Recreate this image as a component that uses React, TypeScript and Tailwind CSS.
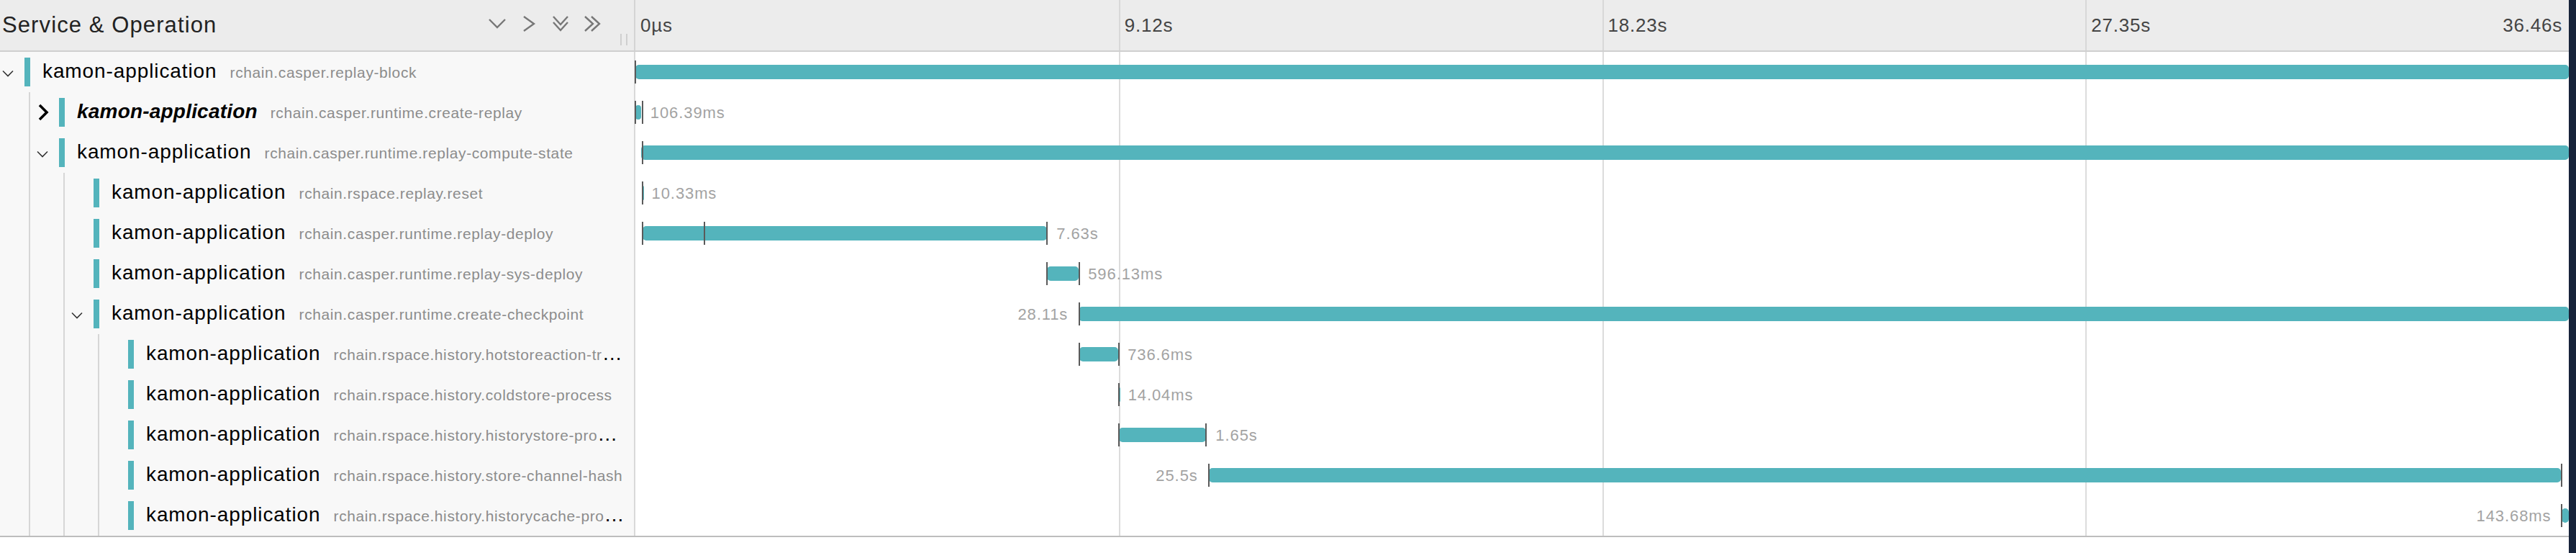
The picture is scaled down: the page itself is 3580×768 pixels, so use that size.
import React from 'react';

const TOTAL = 36.46;

type Row = {
  depth: number;
  toggle?: 'open' | 'closed';
  op: string;
  start: number;
  end: number;
  ticks: number[];
  label?: string;
  side?: 'left' | 'right';
};

const ROWS: Row[] = [
  { depth: 0, toggle: 'open', op: 'rchain.casper.replay-block', start: 0, end: 36.46, ticks: [0] },
  { depth: 1, toggle: 'closed', op: 'rchain.casper.runtime.create-replay', start: 0, end: 0.1064, ticks: [0, 0.136], label: '106.39ms', side: 'right' },
  { depth: 1, toggle: 'open', op: 'rchain.casper.runtime.replay-compute-state', start: 0.1064, end: 36.46, ticks: [0.136] },
  { depth: 2, op: 'rchain.rspace.replay.reset', start: 0.12, end: 0.1303, ticks: [0.136], label: '10.33ms', side: 'right' },
  { depth: 2, op: 'rchain.casper.runtime.replay-deploy', start: 0.1357, end: 7.7657, ticks: [0.1357, 1.302, 7.7657], label: '7.63s', side: 'right' },
  { depth: 2, op: 'rchain.casper.runtime.replay-sys-deploy', start: 7.7657, end: 8.3618, ticks: [7.7657, 8.37], label: '596.13ms', side: 'right' },
  { depth: 2, toggle: 'open', op: 'rchain.casper.runtime.create-checkpoint', start: 8.362, end: 36.46, ticks: [8.37], label: '28.11s', side: 'left' },
  { depth: 3, op: 'rchain.rspace.history.hotstoreaction-transform', start: 8.37, end: 9.1066, ticks: [8.37, 9.12], label: '736.6ms', side: 'right' },
  { depth: 3, op: 'rchain.rspace.history.coldstore-process', start: 9.1, end: 9.114, ticks: [9.115], label: '14.04ms', side: 'right' },
  { depth: 3, op: 'rchain.rspace.history.historystore-process', start: 9.115, end: 10.765, ticks: [9.115, 10.765], label: '1.65s', side: 'right' },
  { depth: 3, op: 'rchain.rspace.history.store-channel-hash', start: 10.81, end: 36.31, ticks: [10.81, 36.33], label: '25.5s', side: 'left' },
  { depth: 3, op: 'rchain.rspace.history.historycache-process', start: 36.33, end: 36.46, ticks: [36.33], label: '143.68ms', side: 'left' },
];

const pct = (t: number) => (t / TOTAL) * 100;

function HeaderIcons() {
  return (
    <div className="-mt-[4px] flex gap-[20px]">
      <svg width="24" height="24" viewBox="0 0 24 24">
        <polyline points="1,6 12,17 23,6" fill="none" stroke="#777" strokeWidth="2.4" />
      </svg>
      <svg width="24" height="24" viewBox="0 0 24 24">
        <polyline points="5,2 19,12 5,22" fill="none" stroke="#777" strokeWidth="2.4" />
      </svg>
      <svg width="24" height="24" viewBox="0 0 24 24">
        <polyline points="2,2 12,13 22,2" fill="none" stroke="#777" strokeWidth="2.4" />
        <polyline points="2,10 12,21 22,10" fill="none" stroke="#777" strokeWidth="2.4" />
      </svg>
      <svg width="24" height="24" viewBox="0 0 24 24">
        <polyline points="2,2 13,12 2,22" fill="none" stroke="#777" strokeWidth="2.4" />
        <polyline points="11,2 22,12 11,22" fill="none" stroke="#777" strokeWidth="2.4" />
      </svg>
    </div>
  );
}

function Toggle({ kind }: { kind?: 'open' | 'closed' }) {
  if (kind === 'open')
    return (
      <svg width="16" height="10" viewBox="0 0 16 10" className="mt-[4px]">
        <polyline points="1,1.5 8,8.5 15,1.5" fill="none" stroke="#333" strokeWidth="1.6" />
      </svg>
    );
  if (kind === 'closed')
    return (
      <svg width="16" height="24" viewBox="0 0 16 24" className="ml-[1px]">
        <polyline points="3,2 13,12 3,22" fill="none" stroke="#000" strokeWidth="3.6" />
      </svg>
    );
  return null;
}

function NameRow({ row }: { row: Row }) {
  const hot = row.toggle === 'closed';
  return (
    <div className="flex h-[56px] items-center">
      {Array.from({ length: row.depth }).map((_, i) => (
        <div key={i} className="flex h-full w-[48px] flex-none pl-[40px]">
          <div className="h-full w-[2px] bg-[#d6d6d6]" />
        </div>
      ))}
      <div className="flex w-[34px] flex-none items-center pl-[3px]">
        <Toggle kind={row.toggle} />
      </div>
      <div className="h-[40px] w-[8px] flex-none bg-[#54b4bc]" />
      <div className="ml-[17px] min-w-0 flex-1 truncate pr-[12px] text-[28px] leading-[56px] text-black">
        <span className={hot ? 'font-bold italic tracking-[0.2px]' : 'tracking-[0.9px]'}>kamon-application</span>
        <span className="ml-[18px] text-[21px] tracking-[0.6px] text-[#8c8c8c]">{row.op}</span>
      </div>
    </div>
  );
}

function BarRow({ row }: { row: Row }) {
  return (
    <div className="relative h-[56px]">
      <div
        className="absolute top-[18px] h-[20px] min-w-[3px] rounded-[5px] bg-[#54b4bc]"
        style={{ left: `${pct(row.start)}%`, width: `${pct(row.end - row.start)}%` }}
      />
      {row.ticks.map((t, i) => (
        <div
          key={i}
          className="absolute top-[12px] h-[32px] w-[2px] bg-[#5a5a5a]"
          style={{ left: `calc(${pct(t)}% - 1px)` }}
        />
      ))}
      {row.label && (
        <div
          className="absolute top-0 flex h-full items-center whitespace-nowrap text-[22px] tracking-[0.9px] text-[#a3a3a3]"
          style={
            row.side === 'right'
              ? { left: `calc(${pct(row.end)}% + 13px)` }
              : { right: `calc(${100 - pct(row.start)}% + 15px)` }
          }
        >
          {row.label}
        </div>
      )}
    </div>
  );
}

export default function App() {
  return (
    <div className="flex h-[768px] w-[3580px] bg-white font-['Liberation_Sans',Arial,sans-serif]">
      <div className="flex w-[3570px] flex-col">
        <div className="flex h-[72px] border-b-2 border-[#cfcfcf] bg-[#ececec]">
          <div className="flex w-[883px] flex-none items-center border-r-2 border-[#d4d4d4] pl-[3px] pr-[9px]">
            <div className="flex-1 text-[31px] tracking-[1.1px] text-[#222]">Service &amp; Operation</div>
            <HeaderIcons />
            <div className="mb-[7px] ml-[27px] flex h-[16px] gap-[6px] self-end">
              <div className="w-[2px] bg-[#cfcfcf]" />
              <div className="w-[2px] bg-[#cfcfcf]" />
            </div>
          </div>
          <div className="grid flex-1 grid-cols-4 text-[26px] tracking-[0.8px] text-[#444]">
            <div className="flex items-center pl-[7px]">0µs</div>
            <div className="flex items-center border-l-2 border-[#d8d8d8] pl-[6px]">9.12s</div>
            <div className="flex items-center border-l-2 border-[#d8d8d8] pl-[6px]">18.23s</div>
            <div className="flex items-center justify-between border-l-2 border-[#d8d8d8] pl-[6px] pr-[9px]">
              <span>27.35s</span>
              <span>36.46s</span>
            </div>
          </div>
        </div>
        <div className="flex h-[674px] border-b-2 border-[#bdbdbd]">
          <div className="w-[883px] flex-none border-r-2 border-[#d9d9d9] bg-[#f8f8f8]">
            {ROWS.map((r, i) => (
              <NameRow key={i} row={r} />
            ))}
          </div>
          <div className="relative flex-1">
            <div className="absolute inset-0 grid grid-cols-4">
              <div />
              <div className="border-l-2 border-[#dcdcdc]" />
              <div className="border-l-2 border-[#dcdcdc]" />
              <div className="border-l-2 border-[#dcdcdc]" />
            </div>
            {ROWS.map((r, i) => (
              <BarRow key={i} row={r} />
            ))}
          </div>
        </div>
      </div>
      <div className="w-[10px] bg-[#17233a]" />
    </div>
  );
}
